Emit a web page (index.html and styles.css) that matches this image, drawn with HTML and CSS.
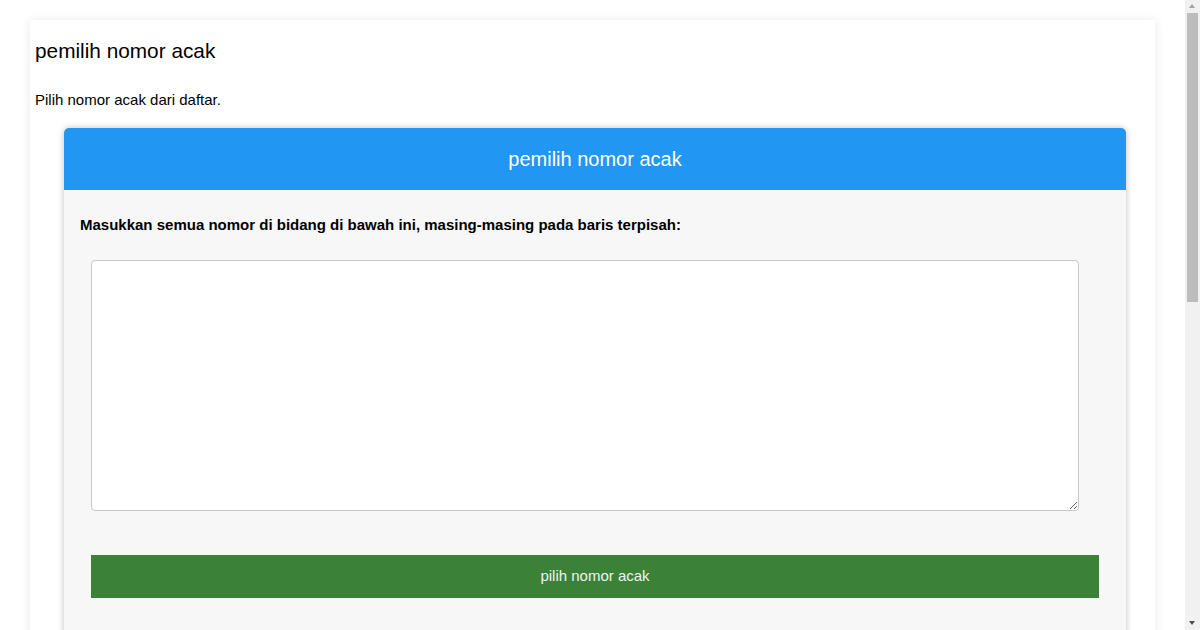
FILE: index.html
```html
<!DOCTYPE html>
<html lang="id">
<head>
<meta charset="utf-8">
<title>pemilih nomor acak</title>
<link rel="stylesheet" href="styles.css">
</head>
<body>
<div class="page">
  <h1 class="title">pemilih nomor acak</h1>
  <p class="intro">Pilih nomor acak dari daftar.</p>
  <div class="card">
    <div class="card-head">pemilih nomor acak</div>
    <div class="card-body">
      <p class="label">Masukkan semua nomor di bidang di bawah ini, masing-masing pada baris terpisah:</p>
      <textarea class="numbers"></textarea>
      <button class="pick" type="button">pilih nomor acak</button>
    </div>
  </div>
</div>
<div class="scrollbar" aria-hidden="true">
  <span class="arrow arrow-up"></span>
  <span class="thumb"></span>
  <span class="arrow arrow-down"></span>
</div>
</body>
</html>
```
FILE: styles.css
```css
html {
  overflow: hidden;
}
html, body {
  margin: 0;
  padding: 0;
  background: #ffffff;
  font-family: "Liberation Sans", Arial, sans-serif;
  color: #000;
}
.page {
  margin: 20px 45px 0 30px;
  padding: 19px 5px 60px;
  background: #fff;
  box-shadow: 0 0 10px rgba(0, 0, 0, 0.09);
}
.title {
  margin: 0;
  font-size: 20.8px;
  font-weight: normal;
  line-height: 24px;
}
.intro {
  margin: 28px 0 0;
  font-size: 15px;
  line-height: 18px;
}
.card {
  margin: 19px 24px 0 29px;
  border-radius: 5px;
  box-shadow: 0 0 6px rgba(0, 0, 0, 0.25);
  background: #f7f7f7;
}
.card-head {
  height: 62px;
  line-height: 62px;
  text-align: center;
  background: #2196f3;
  color: #fff;
  font-size: 20px;
  border-radius: 5px 5px 0 0;
}
.card-body {
  padding: 26px 16px 60px;
}
.label {
  margin: 0;
  font-size: 15px;
  font-weight: bold;
  line-height: 18px;
}
.numbers {
  display: block;
  box-sizing: border-box;
  margin: 26px 0 0 11px;
  width: calc(100% - 42px);
  height: 251px;
  border: 1px solid #c8c8c8;
  border-radius: 4px;
  background: #fff;
  font-family: "Liberation Sans", Arial, sans-serif;
  font-size: 15px;
}
.pick {
  display: block;
  box-sizing: border-box;
  margin: 44px 11px 0;
  width: calc(100% - 22px);
  height: 43px;
  border: none;
  background: #3b8238;
  color: #f0f0f0;
  font-family: "Liberation Sans", Arial, sans-serif;
  font-size: 15px;
  padding: 0 0 2px;
}
.scrollbar {
  position: fixed;
  top: 0;
  right: 0;
  width: 15px;
  height: 100vh;
  background: #f1f1f1;
}
.thumb {
  position: absolute;
  left: 2px;
  top: 13px;
  width: 11px;
  height: 289px;
  background: #bcbcbc;
}
.arrow {
  position: absolute;
  left: 4px;
  width: 0;
  height: 0;
  border-left: 3.5px solid transparent;
  border-right: 3.5px solid transparent;
}
.arrow-up {
  top: 4px;
  border-bottom: 4px solid #a3a3a3;
}
.arrow-down {
  bottom: 5px;
  border-top: 4px solid #505050;
}
```
